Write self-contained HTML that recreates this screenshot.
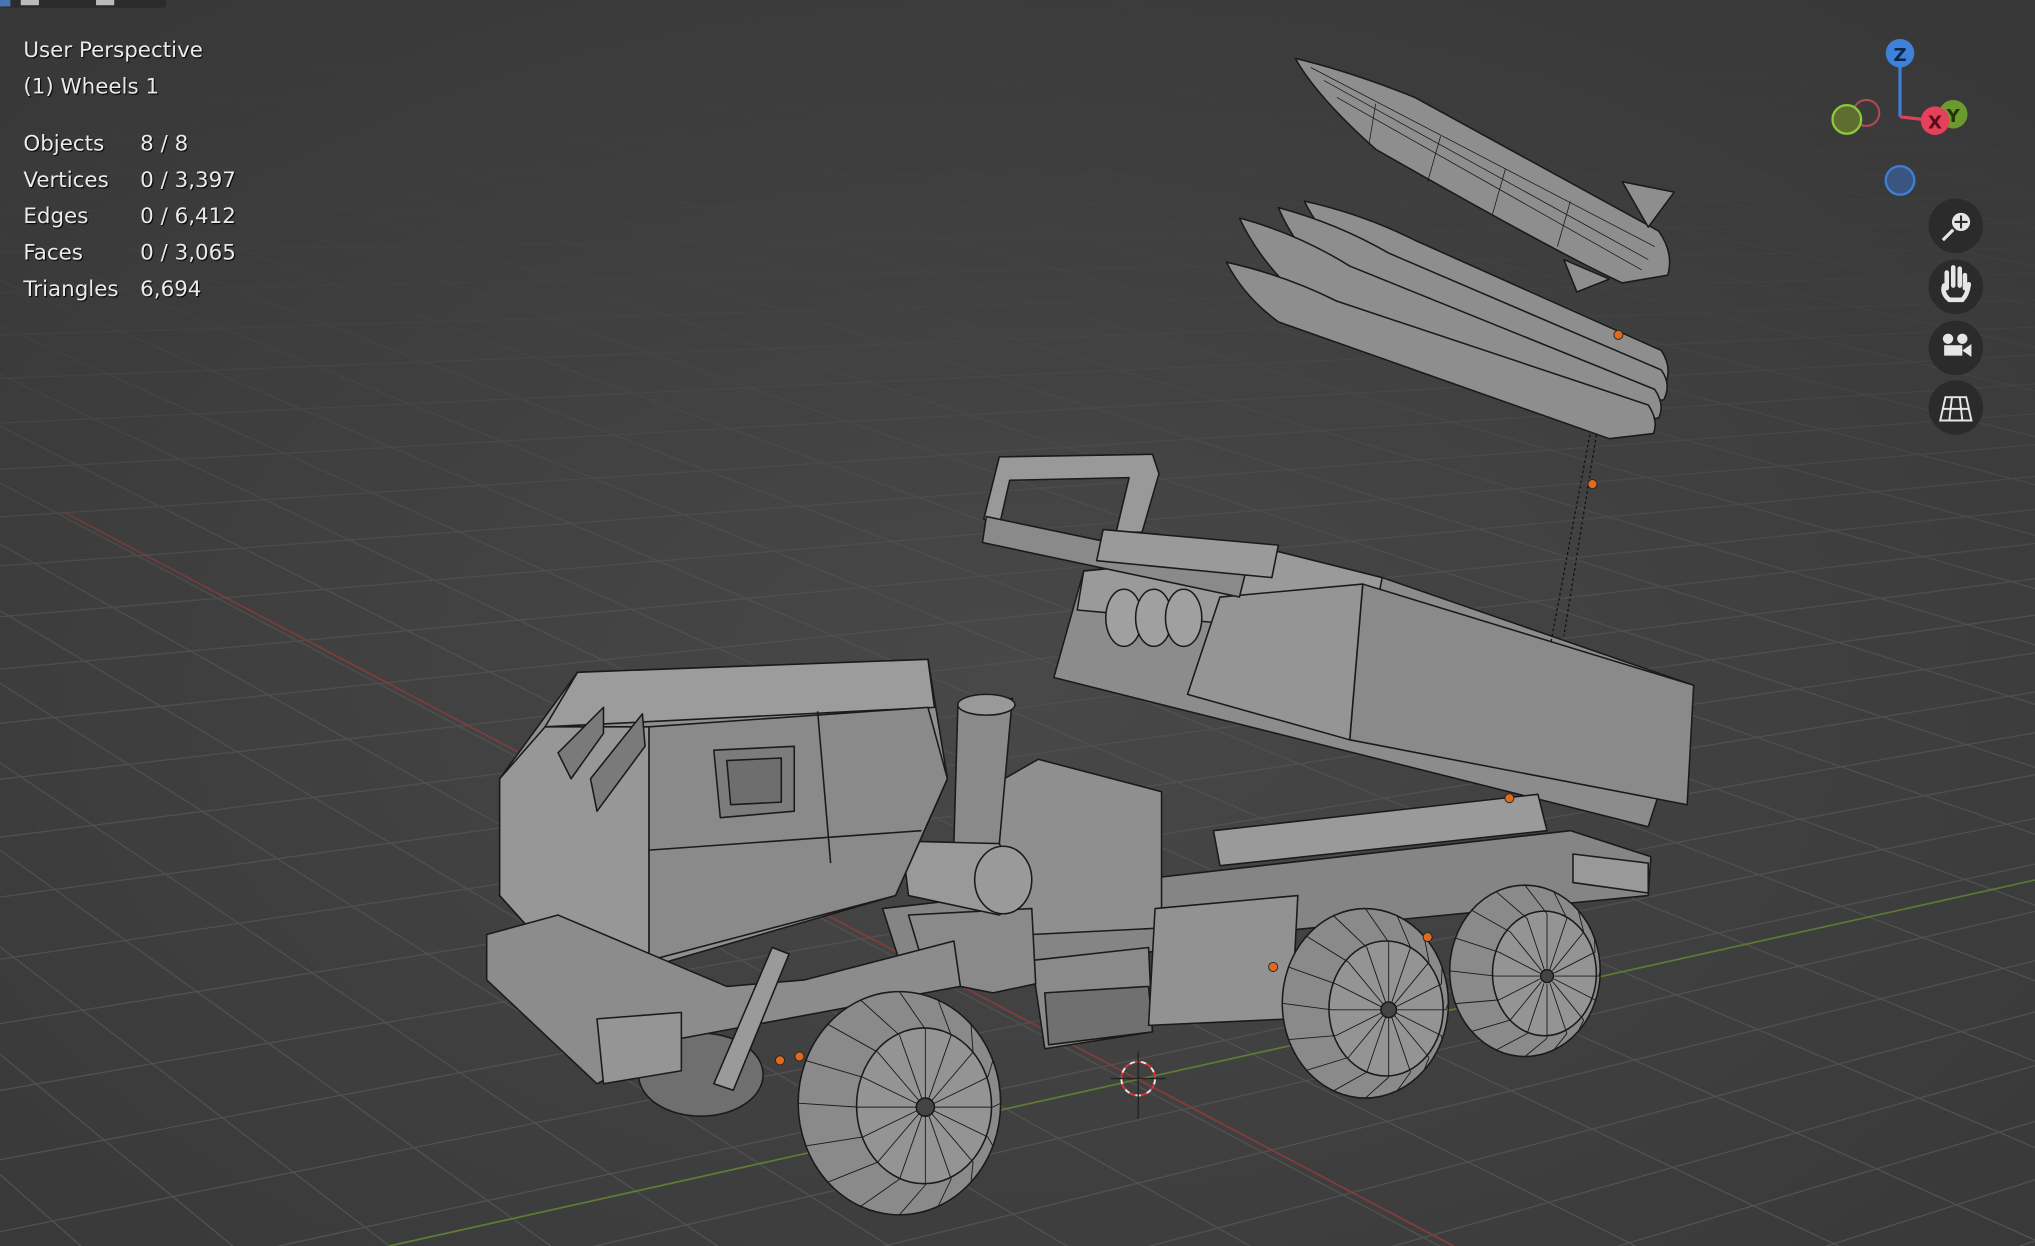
<!DOCTYPE html>
<html><head><meta charset="utf-8"><style>
html,body{margin:0;padding:0;background:#3d3d3d;overflow:hidden;width:2035px;height:1246px}
svg{display:block;position:absolute;left:0;top:0}
</style></head><body>
<svg id="s" width="2035" height="1246" viewBox="0 0 1568 960" preserveAspectRatio="none" xmlns="http://www.w3.org/2000/svg">
<defs>
<radialGradient id="bg" cx="0.5" cy="0.55" r="0.7">
<stop offset="0" stop-color="#484848"/><stop offset="1" stop-color="#383838"/>
</radialGradient>
<linearGradient id="fade" x1="0" y1="0" x2="0" y2="1">
<stop offset="0" stop-color="#fff" stop-opacity="0"/>
<stop offset="0.25" stop-color="#fff" stop-opacity="0.2"/>
<stop offset="0.5" stop-color="#fff" stop-opacity="0.85"/>
<stop offset="1" stop-color="#fff" stop-opacity="1"/>
</linearGradient>
<mask id="m"><rect width="1568" height="960" fill="url(#fade)"/></mask>
<clipPath id="c"><rect width="1568" height="960"/></clipPath>
</defs>
<g clip-path="url(#c)">
<rect width="1568" height="960" fill="url(#bg)"/>
<g id="grid" mask="url(#m)" stroke="#525252" stroke-width="1"></g>
<g mask="url(#m)">
<line x1="50" y1="395" x2="1120" y2="960" stroke="#8a3b3b" stroke-width="1.3"/>
<line x1="300" y1="960" x2="1568" y2="678" stroke="#5f7f2f" stroke-width="1.3"/>
</g>
<g stroke="#1a1a1a" stroke-width="1.2" stroke-linejoin="round">
<ellipse cx="540" cy="828" rx="48" ry="32" fill="#6f6f6f"/>
<polygon points="812,522 835,440 985,425 1065,445 1305,528 1270,637" fill="#8c8c8c"/>
<polygon points="835,440 985,425 1065,445 1050,520 940,480 830,470" fill="#9a9a9a"/>
<polygon points="1050,450 1305,528 1300,620 1040,570" fill="#8a8a8a"/>
<polygon points="940,460 1050,450 1040,570 915,535" fill="#959595"/>
<ellipse cx="866" cy="476" rx="14" ry="22" fill="#a0a0a0"/>
<ellipse cx="889" cy="476" rx="14" ry="22" fill="#a0a0a0"/>
<ellipse cx="912" cy="476" rx="14" ry="22" fill="#a0a0a0"/>
<polygon points="758,400 770,352 888,350 893,365 880,410 860,410 870,368 778,370 770,405" fill="#999"/>
<polygon points="760,398 960,440 955,460 757,418" fill="#8a8a8a"/>
<polygon points="850,408 985,420 980,445 845,432" fill="#9a9a9a"/>
<polygon points="680,700 1210,640 1272,660 1270,690 1000,716 700,762" fill="#858585"/>
<polygon points="935,640 1185,612 1192,640 940,667" fill="#9a9a9a"/>
<polygon points="1212,658 1270,665 1270,688 1212,680" fill="#999"/>
<polygon points="765,605 800,585 895,610 895,715 795,720 760,700" fill="#8f8f8f"/>
<polygon points="795,740 885,730 888,795 805,808" fill="#8a8a8a"/>
<polygon points="805,765 885,760 888,795 808,805" fill="#707070"/>
<polygon points="700,705 795,700 798,758 765,765 715,755" fill="#8a8a8a"/>
<polygon points="890,700 1000,690 995,785 885,790" fill="#929292"/>
<polygon points="738,545 780,538 770,650 735,650" fill="#8a8a8a"/>
<ellipse cx="760" cy="543" rx="22" ry="8" fill="#999"/>
<polygon points="695,648 770,650 790,690 770,705 700,690" fill="#999"/>
<ellipse cx="773" cy="678" rx="22" ry="26" fill="#9a9a9a"/>
<polygon points="385,600 445,518 715,508 730,600 690,690 500,745 430,740 385,690" fill="#8f8f8f"/>
<polygon points="445,518 715,508 720,545 420,560" fill="#9c9c9c"/>
<polygon points="500,560 715,545 730,600 690,690 500,740" fill="#8a8a8a"/>
<polygon points="385,600 420,560 500,560 500,745 430,740 385,690" fill="#979797"/>
<line x1="500" y1="655" x2="710" y2="640" /><line x1="630" y1="548" x2="640" y2="665"/>
<polygon points="550,578 612,575 612,625 555,630" fill="#7c7c7c"/>
<polygon points="560,586 602,584 602,618 563,620" fill="#6e6e6e"/>
<polygon points="430,580 465,545 465,565 440,600" fill="#7a7a7a"/>
<polygon points="455,600 495,550 497,575 460,625" fill="#7a7a7a"/>
<polygon points="375,720 430,705 560,760 620,755 735,725 740,760 525,800 460,835 375,755" fill="#8c8c8c"/>
<polygon points="460,785 525,780 525,825 465,835" fill="#959595"/>
<polygon points="550,835 595,730 608,735 565,840" fill="#9a9a9a"/>
<g fill="#8a8a8a">
<ellipse cx="1175" cy="748" rx="58" ry="66"/>
<ellipse cx="1190" cy="750" rx="40" ry="48" fill="#949494"/>
<ellipse cx="1052" cy="773" rx="64" ry="73"/>
<ellipse cx="1068" cy="777" rx="44" ry="52" fill="#949494"/>
<ellipse cx="693" cy="850" rx="78" ry="86"/>
<ellipse cx="712" cy="852" rx="52" ry="60" fill="#949494"/>
</g>
<g id="spokes" stroke-width="0.7" fill="none"></g>
<g fill="#444"><circle cx="1192" cy="752" r="5"/><circle cx="1070" cy="778" r="6"/><circle cx="713" cy="853" r="7"/></g>
<g fill="#8e8e8e">
<path d="M998,45 Q1040,55 1090,75 L1278,178 Q1290,195 1285,212 L1250,218 Q1200,195 1060,115 Q1015,75 998,45Z"/>
<polygon points="1250,140 1290,148 1270,175"/><polygon points="1205,200 1240,215 1215,225"/>
<path d="M1005,155 Q1050,165 1090,185 L1280,270 Q1288,282 1284,294 L1250,300 L1050,210 Q1020,185 1005,155Z"/>
<path d="M985,160 Q1030,172 1070,195 L1280,285 Q1288,296 1282,308 L1250,312 L1030,218 Q1000,195 985,160Z"/>
<path d="M955,168 Q1000,180 1040,205 L1275,300 Q1283,312 1278,322 L1245,328 L1000,228 Q970,200 955,168Z"/>
<path d="M945,202 Q990,212 1030,232 L1270,312 Q1278,324 1274,334 L1240,338 L985,248 Q958,228 945,202Z"/>
</g>
<g stroke-width="0.6" fill="none">
<path d="M1010,52 L1275,190 M1020,62 L1270,200 M1030,75 L1265,208 M1060,80 L1055,110 M1110,105 L1100,140 M1160,130 L1150,165 M1210,155 L1200,190"/>
</g>
</g>
<polyline points="1225,335 1195,495" stroke="#111" stroke-dasharray="2,2" fill="none"/>
<polyline points="1230,335 1205,490" stroke="#111" stroke-dasharray="2,2" fill="none"/>
<g fill="#e06a1c" stroke="#222" stroke-width="0.7">
<circle cx="1247" cy="258" r="3.5"/><circle cx="1227" cy="373" r="3.5"/><circle cx="1163" cy="615" r="3.5"/>
<circle cx="981" cy="745" r="3.5"/><circle cx="1100" cy="722" r="3.5"/><circle cx="601" cy="817" r="3.5"/><circle cx="616" cy="814" r="3.5"/>
</g>
<circle cx="877" cy="831" r="13" fill="none" stroke="#e8e8e8" stroke-width="1.5" stroke-dasharray="5,4"/>
<circle cx="877" cy="831" r="13" fill="none" stroke="#d33" stroke-width="1.5" stroke-dasharray="5,4" stroke-dashoffset="4.5"/>
<line x1="877" y1="810" x2="877" y2="862" stroke="#222"/><line x1="856" y1="831" x2="898" y2="831" stroke="#222"/>
<rect x="0" y="-6" width="128" height="12" rx="3" fill="#2c2c2c"/>
<rect x="0" y="0" width="8" height="5" fill="#4772b3"/>
<rect x="16" y="0" width="14" height="4" fill="#bbb"/><rect x="74" y="0" width="14" height="4" fill="#bbb"/>
<g font-family="DejaVu Sans, Liberation Sans, sans-serif" font-size="16.5" fill="#eaeaea" style="text-shadow:1px 1px 1px #000">
<text x="18" y="44">User Perspective</text>
<text x="18" y="72">(1) Wheels 1</text>
<text x="18" y="116">Objects</text><text x="108" y="116">8 / 8</text>
<text x="18" y="144">Vertices</text><text x="108" y="144">0 / 3,397</text>
<text x="18" y="172">Edges</text><text x="108" y="172">0 / 6,412</text>
<text x="18" y="200">Faces</text><text x="108" y="200">0 / 3,065</text>
<text x="18" y="228">Triangles</text><text x="108" y="228">6,694</text>
</g>
<line x1="1464" y1="41" x2="1464" y2="90" stroke="#3d7fd6" stroke-width="2.5"/>
<line x1="1464" y1="90" x2="1491" y2="93" stroke="#d8455b" stroke-width="2.5"/>
<circle cx="1438" cy="87" r="10" fill="none" stroke="#b14a55" stroke-width="1.6"/>
<circle cx="1423" cy="92" r="11" fill="#5e6e33" stroke="#8ec73a" stroke-width="1.8"/>
<circle cx="1464" cy="139" r="11" fill="#3a5680" stroke="#3d7fd6" stroke-width="1.8"/>
<circle cx="1505" cy="88" r="11" fill="#6d9a2e"/>
<text x="1505" y="94" font-family="DejaVu Sans,sans-serif" font-weight="bold" font-size="14" fill="#23330c" text-anchor="middle">Y</text>
<circle cx="1491" cy="93" r="11" fill="#e5415b"/>
<text x="1491" y="99" font-family="DejaVu Sans,sans-serif" font-weight="bold" font-size="14" fill="#5a0b18" text-anchor="middle">X</text>
<circle cx="1464" cy="41" r="11" fill="#3d82d8"/>
<text x="1464" y="47" font-family="DejaVu Sans,sans-serif" font-weight="bold" font-size="14" fill="#0d2547" text-anchor="middle">Z</text>
<g fill="#2b2b2b"><circle cx="1507" cy="174" r="21"/><circle cx="1507" cy="221" r="21"/><circle cx="1507" cy="268" r="21"/><circle cx="1507" cy="314" r="21"/></g>
<g fill="#e6e6e6" stroke="#e6e6e6">
<circle cx="1511" cy="171" r="7" stroke="none"/><line x1="1505" y1="177" x2="1497" y2="185" stroke-width="2.5"/>
<path d="M1511 166v10M1506 171h10" stroke="#2b2b2b" stroke-width="1.6" fill="none"/>
<path d="M1500 222v-12M1505 220v-14M1510 220v-13M1514 222v-10M1498 220q-2 6 4 11h10q4-4 5-12" stroke-width="3.5" stroke-linecap="round" fill="none"/>
<circle cx="1501" cy="261" r="4" stroke="none"/><circle cx="1512" cy="261" r="4" stroke="none"/>
<rect x="1498" y="266" width="14" height="8" stroke="none"/><polygon points="1512,270 1519,265 1519,275" stroke="none"/>
<path d="M1499 306h16l4 18h-24zM1497 315h20M1504 306l-2 18M1510 306l2 18" fill="none" stroke-width="1.5"/>
</g>
</g>
</svg>
<script>
(function(){
var ns='http://www.w3.org/2000/svg';
function L(g,x1,y1,x2,y2){var l=document.createElementNS(ns,'line');l.setAttribute('x1',x1);l.setAttribute('y1',y1);l.setAttribute('x2',x2);l.setAttribute('y2',y2);g.appendChild(l);}
var g=document.getElementById('grid');
var V1=[-1500,-423],V2=[4000,137];
for(var k=-30;k<=30;k++){var x=300+k*95, y=960-0.2224*(x-300);
var dx=x-V1[0],dy=y-V1[1];L(g,V1[0],V1[1],V1[0]+dx*3,V1[1]+dy*3);}
for(var k=-30;k<=40;k++){var x=50+k*62, y=395+0.528*(x-50);
var dx=x-V2[0],dy=y-V2[1];L(g,V2[0],V2[1],V2[0]+dx*3,V2[1]+dy*3);}
var sp=document.getElementById('spokes');
[[1192,752,40,48,58,66,1175,748],[1070,778,44,52,64,73,1052,773],[713,853,52,60,78,86,693,850]].forEach(function(w){
for(var i=0;i<16;i++){var a=i*Math.PI/8;
L(sp,w[0]+Math.cos(a)*6,w[1]+Math.sin(a)*6,w[0]+Math.cos(a)*w[2],w[1]+Math.sin(a)*w[3]);
L(sp,w[0]+Math.cos(a)*w[2],w[1]+Math.sin(a)*w[3],w[6]+Math.cos(a)*w[4],w[7]+Math.sin(a)*w[5]);}});
})();
</script>
</body></html>
